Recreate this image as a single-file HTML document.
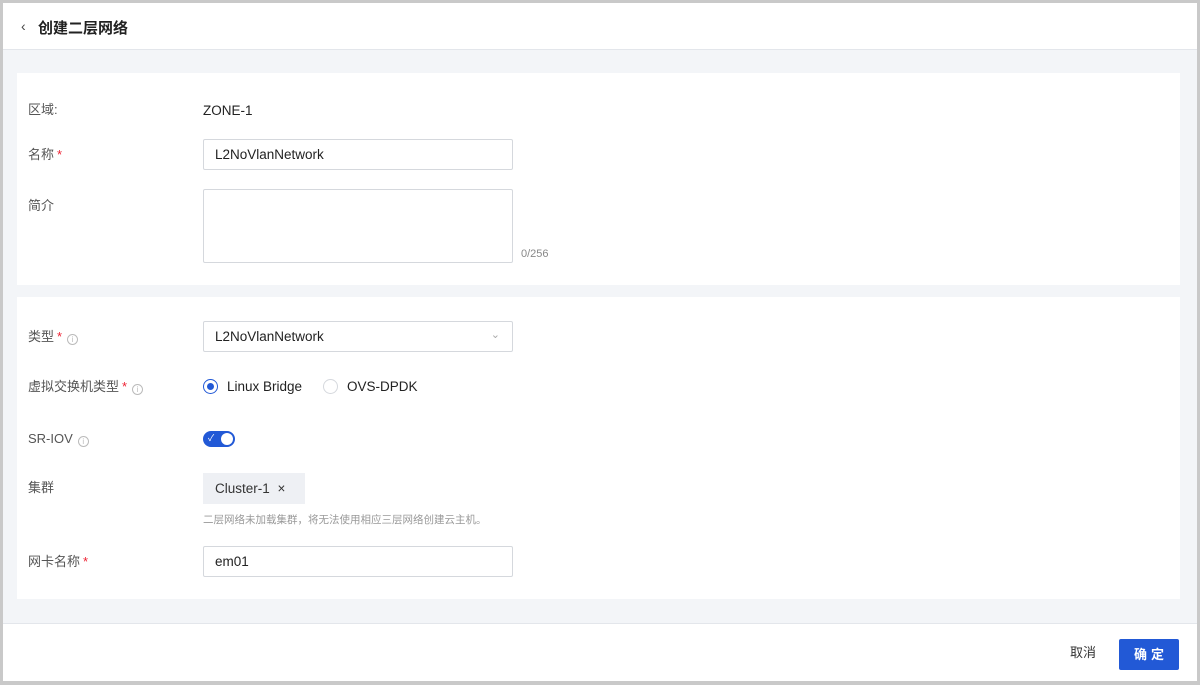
<!DOCTYPE html>
<html><head><meta charset="utf-8"><style>
*{box-sizing:border-box;margin:0;padding:0}
body{width:1200px;height:685px;background:#c9c9c9;font-family:"Liberation Sans","Noto Sans CJK SC",sans-serif;font-size:13px;color:#333;position:relative;overflow:hidden}
.frame{position:absolute;left:3px;top:3px;width:1194px;height:678px;background:#f3f5f8}
.hdr{position:absolute;left:0;top:0;width:100%;height:47px;background:#fff;border-bottom:1px solid #e3e6eb}
.hdr .t{position:absolute;left:35px;top:14px;font-size:15px;font-weight:bold;color:#222}
.hdr .b{position:absolute;left:18px;top:15px;font-size:14px;color:#444}
.card{position:absolute;left:14px;width:1163px;background:#fff}
.lbl{position:absolute;left:11px;color:#555;font-size:13px;line-height:16px}
.req{color:#e23;margin-left:3px}
.info{display:inline-block;width:11px;height:11px;border:1px solid #bbb;border-radius:50%;margin-left:5px;vertical-align:-1px;font-size:8px;color:#bbb;text-align:center;line-height:9px}
.inp{position:absolute;left:186px;width:310px;height:31px;border:1px solid #d5d8dd;border-radius:2px;padding:0 11px;line-height:29px;color:#222;font-size:13.5px}
.ftr{position:absolute;left:0;top:620px;width:100%;height:58px;background:#fff;border-top:1px solid #e3e6eb}
</style></head><body><div class="frame">
<div class="hdr"><span class="b">‹</span><span class="t">创建二层网络</span></div>
<div class="card" style="top:70px;height:212px">
<div class="lbl" style="top:29px">区域:</div>
<div style="position:absolute;left:186px;top:30px;color:#222;font-size:13.5px">ZONE-1</div>
<div class="lbl" style="top:74px">名称<span class="req">*</span></div>
<div class="inp" style="top:66px">L2NoVlanNetwork</div>
<div class="lbl" style="top:125px">简介</div>
<div class="inp" style="top:116px;height:74px"></div>
<div style="position:absolute;left:504px;top:175px;font-size:11px;color:#888">0/256</div>
</div>
<div class="card" style="top:294px;height:302px">
<div class="lbl" style="top:32px">类型<span class="req">*</span><span class="info">i</span></div>
<div class="inp" style="top:24px">L2NoVlanNetwork<span style="position:absolute;right:12px;top:-1px;color:#aaa;font-size:11px">&#8964;</span></div>
<div class="lbl" style="top:82px">虚拟交换机类型<span class="req">*</span><span class="info">i</span></div>
<div style="position:absolute;left:186px;top:82px;width:15px;height:15px;border:1px solid #2259d6;border-radius:50%"><div style="position:absolute;left:3px;top:3px;width:7px;height:7px;border-radius:50%;background:#2259d6"></div></div>
<div style="position:absolute;left:210px;top:82px;color:#222;font-size:13.5px">Linux Bridge</div>
<div style="position:absolute;left:306px;top:82px;width:15px;height:15px;border:1px solid #d5d8dd;border-radius:50%"></div>
<div style="position:absolute;left:330px;top:82px;color:#222;font-size:13.5px">OVS-DPDK</div>
<div class="lbl" style="top:134px">SR-IOV<span class="info">i</span></div>
<div style="position:absolute;left:186px;top:134px;width:32px;height:16px;border-radius:8px;background:#2259d6"><span style="position:absolute;left:5px;top:0px;color:#fff;font-size:9px">✓</span><div style="position:absolute;right:2px;top:2px;width:12px;height:12px;border-radius:50%;background:#fff"></div></div>
<div class="lbl" style="top:183px">集群</div>
<div style="position:absolute;left:186px;top:176px;width:102px;height:31px;background:#eef0f4;padding-left:12px;line-height:31px;color:#333;font-size:13.5px">Cluster-1 <span style="margin-left:4px">×</span></div>
<div style="position:absolute;left:186px;top:215px;font-size:10.5px;color:#999">二层网络未加载集群，将无法使用相应三层网络创建云主机。</div>
<div class="lbl" style="top:257px">网卡名称<span class="req">*</span></div>
<div class="inp" style="top:249px">em01</div>
</div>
<div class="ftr">
<div style="position:absolute;left:1067px;top:21px;color:#333;line-height:16px">取消</div>
<div style="position:absolute;left:1116px;top:15px;width:60px;height:31px;background:#2259d6;border-radius:2px;color:#fff;text-align:center;line-height:31px;font-weight:bold;letter-spacing:4px;padding-left:4px">确定</div>
</div>
</div></body></html>
